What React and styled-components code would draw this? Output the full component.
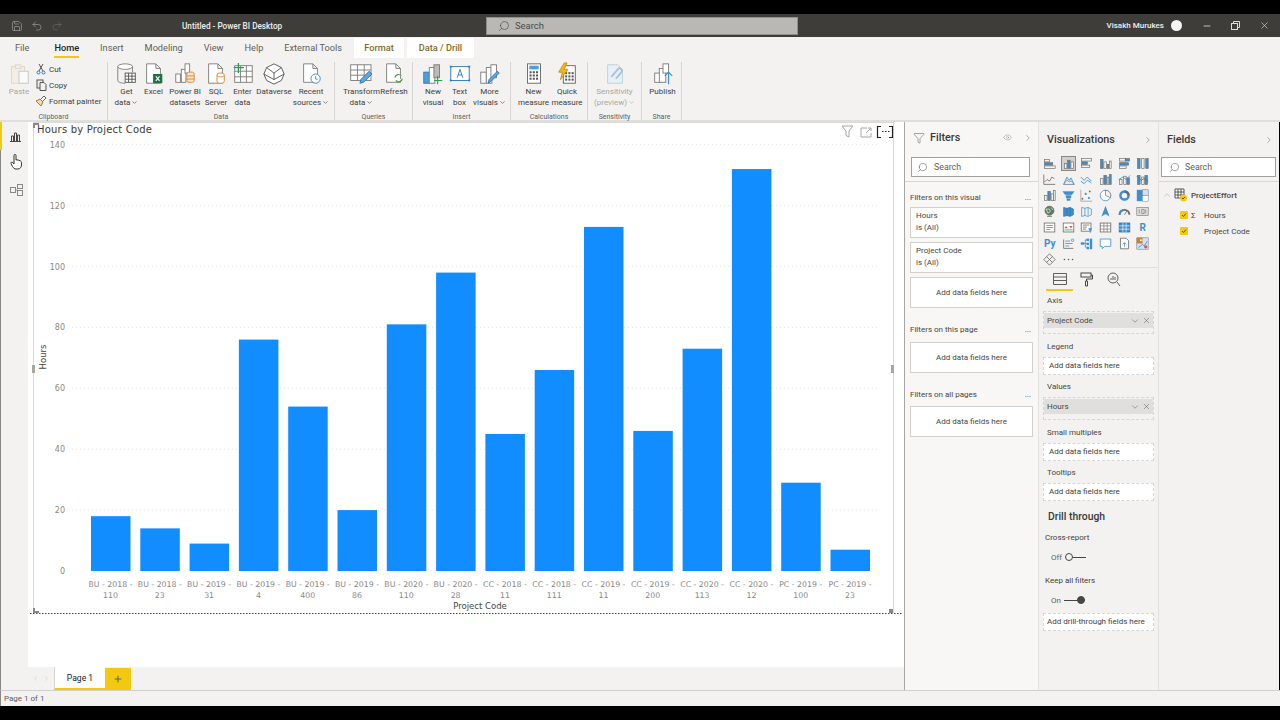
import styled, { createGlobalStyle } from "styled-components";
import { ChevronRight, ChevronDown, ChevronUp, Search, X, Eye, Filter, Plus, Undo2, Redo2, Save, Minus } from "lucide-react";

const Global = createGlobalStyle`
  html, body { margin: 0; padding: 0; background: #000; }
  body { font-family: Roboto, "Open Sans", "Liberation Sans", sans-serif; }
  * { box-sizing: border-box; }
`;

const Shell = styled.div`
  width: 1280px;
  height: 720px;
  padding: 14px 0;
  background: #000;
  display: flex;
  flex-direction: column;
  overflow: hidden;
`;

/* title bar */
const TitleBar = styled.div`
  height: 23px;
  background: #3f3d39;
  display: flex;
  align-items: center;
  color: #f3f2f1;
  flex: none;
`;
const Qat = styled.div`
  width: 182px;
  padding-left: 11px;
  display: flex;
  gap: 8px;
  align-items: center;
  color: #a5a3a0;
`;
const WinTitle = styled.div`
  width: 304px;
  font-size: 8.2px;
  font-weight: 500;
  color: #eeeeee;
`;
const Glass = styled(Search)`
  transform: scaleX(-1);
`;
const TopSearch = styled.div`
  width: 312px;
  height: 18px;
  background: #b9b8b4;
  border: 1px solid #8f8e8a;
  display: flex;
  align-items: center;
  gap: 5px;
  padding-left: 11px;
  font-size: 9.4px;
  color: #4c4b49;
`;
const User = styled.div`
  margin-left: auto;
  padding-right: 1px;
  display: flex;
  align-items: center;
  font-size: 8px;
  font-weight: 500;
  color: #eeeeee;
`;
const Avatar = styled.div`
  width: 11px;
  height: 11px;
  border-radius: 50%;
  background: #f5f5f5;
  margin: 0 10px 0 7px;
`;
const WinBtn = styled.div`
  width: 29px;
  display: flex;
  justify-content: center;
  color: #dddddd;
`;

/* tabs */
const TabRow = styled.div`
  height: 21px;
  background: #f3f2f1;
  display: flex;
  padding-left: 15px;
  flex: none;
`;
const Tab = styled.div`
  height: 21px;
  font-size: 9.2px;
  line-height: 21px;
  margin-right: ${(p) => p.$mr ?? 21}px;
  color: ${(p) => (p.$active ? "#252423" : "#605e5c")};
  font-weight: ${(p) => (p.$active ? 500 : 400)};
  border-bottom: ${(p) => (p.$active ? "2px solid #f2c811" : "none")};
`;
const ContextTab = styled.div`
  height: 20px;
  margin-top: 1px;
  margin-right: 3px;
  width: ${(p) => p.$w}px;
  background: #fff;
  text-align: center;
  font-size: 9.2px;
  line-height: 19px;
  font-weight: 500;
  color: #7d6b2e;
`;

/* ribbon */
const Ribbon = styled.div`
  height: 64px;
  background: #f3f2f1;
  border-bottom: 2px solid #dfdedc;
  display: flex;
  flex: none;
`;
const Group = styled.div`
  width: ${(p) => p.$w}px;
  display: flex;
  flex-direction: column;
  border-right: 1px solid #d8d6d4;
  margin-top: 4px;
`;
const GroupBody = styled.div`
  flex: 1;
  display: flex;
  padding-left: ${(p) => p.$pl ?? 0}px;
`;
const GroupName = styled.div`
  height: 8px;
  font-size: 7px;
  line-height: 10px;
  text-align: center;
  color: #605e5c;
`;
const BigBtn = styled.div`
  width: ${(p) => p.$w}px;
  display: flex;
  flex-direction: column;
  align-items: center;
  color: ${(p) => (p.$off ? "#a8a6a4" : "#3f3e3c")};
  font-size: 8px;
  line-height: 11px;
  text-align: center;
  white-space: nowrap;
  & > svg { flex: none; }
`;
const SmallCol = styled.div`
  display: flex;
  flex-direction: column;
  margin: -1px 0 0 3px;
`;
const SmallBtn = styled.div`
  height: 16px;
  display: grid;
  grid-template-columns: 12px 1fr;
  gap: 2px;
  align-items: center;
  justify-items: center;
  font-size: 8px;
  color: #3f3e3c;
  white-space: nowrap;
  & > span { justify-self: start; }
`;

/* main */
const Main = styled.div`
  height: 568px;
  display: flex;
  flex: none;
`;
const LeftNav = styled.div`
  width: 28px;
  background: #f3f2f1;
  border-left: 1px solid #8a8886;
  display: flex;
  flex-direction: column;
  flex: none;
`;
const NavItem = styled.div`
  height: ${(p) => p.$h}px;
  display: flex;
  align-items: center;
  padding-left: 8px;
  margin-left: -1px;
  border-left: 2px solid ${(p) => (p.$active ? "#f2c811" : "transparent")};
`;
const Canvas = styled.div`
  width: 876px;
  display: flex;
  flex-direction: column;
  flex: none;
  background: #fff;
`;
const Chart = styled.svg`
  width: 876px;
  height: 545px;
  display: block;
  flex: none;
  font-family: "DejaVu Sans", sans-serif;
`;
const PageBar = styled.div`
  height: 23px;
  background: #f3f2f1;
  display: flex;
  flex: none;
`;
const PageNav = styled.div`
  width: 26px;
  display: flex;
  align-items: center;
  justify-content: center;
  gap: 4px;
  color: #c8c6c4;
`;
const BackChevron = styled(ChevronRight)`
  transform: scaleX(-1);
`;
const PageTab = styled.div`
  width: 51px;
  background: #fff;
  border-left: 1px solid #d8d6d4;
  border-bottom: 2px solid #f2c811;
  text-align: center;
  font-size: 8.6px;
  line-height: 22px;
  color: #252423;
`;
const AddPage = styled.div`
  width: 26px;
  background: #f2c811;
  margin-top: 1px;
  display: flex;
  align-items: center;
  justify-content: center;
  color: #605e5c;
`;

/* filters */
const FilterPane = styled.div`
  width: 134px;
  background: #f8f7f6;
  border-left: 1px solid #a8a6a4;
  flex: none;
`;
const PaneHead = styled.div`
  height: 35px;
  display: flex;
  align-items: center;
  padding: 0 ${(p) => p.$pr ?? 7}px ${(p) => p.$pb ?? 0}px ${(p) => p.$pl ?? 8}px;
  font-size: 10.8px;
  font-weight: 500;
  color: #3b3a39;
  gap: 5px;
`;
const PaneTitle = styled.span`
  margin-right: auto;
`;
const EyeGap = styled(Eye)`
  margin-right: 6px;
`;
const SearchBox = styled.div`
  height: 20px;
  margin: 0 ${(p) => p.$mr ?? 8}px 0 ${(p) => p.$ml ?? 6}px;
  background: #fff;
  border: 1px solid #a19f9d;
  display: flex;
  align-items: center;
  gap: ${(p) => p.$gap ?? 6}px;
  padding-left: ${(p) => p.$pl ?? 5}px;
  font-size: 8.8px;
  color: #605e5c;
`;
const Rule = styled.div`
  height: 1px;
  background: #d8d6d4;
  margin-top: ${(p) => p.$mt ?? 4}px;
`;
const FilterBody = styled.div`
  padding: 0 5px;
`;
const SectionHead = styled.div`
  display: flex;
  justify-content: space-between;
  padding: 0 2px 0 0;
  height: 12px;
  line-height: 12px;
  font-size: 8px;
  color: #484644;
  margin-top: ${(p) => p.$mt}px;
  margin-bottom: ${(p) => p.$mb ?? 4}px;
`;
const FilterCard = styled.div`
  height: 31px;
  background: #fff;
  border: 1px solid #d2d0ce;
  margin-bottom: 4px;
  padding: 2px 5px;
  font-size: 8px;
  line-height: 12px;
  color: #484644;
`;
const AddCard = styled(FilterCard)`
  padding-top: 3px;
  line-height: 23px;
  text-align: center;
  margin-bottom: 0;
`;

/* visualizations */
const VizPane = styled.div`
  width: 120px;
  background: #f3f2f1;
  border-left: 1px solid #e4e2e0;
  flex: none;
`;
const VizGrid = styled.div`
  display: grid;
  grid-template-columns: repeat(6, 18.6px);
  grid-auto-rows: 16px;
  margin-top: -2px;
  height: 112px;
  justify-items: center;
  align-items: center;
  padding-left: 1.5px;
`;
const VizCell = styled.div`
  width: 15px;
  height: 15px;
  display: flex;
  align-items: center;
  justify-content: center;
  background: ${(p) => (p.$sel ? "#d2d0ce" : "transparent")};
  border: 1px solid ${(p) => (p.$sel ? "#8a8886" : "transparent")};
`;
const VizLetter = styled.b`
  color: #3d8fd1;
  font-size: 10px;
`;
const VizTabs = styled.div`
  border-top: 1px solid #e1dfdd;
  height: 23px;
  display: flex;
  padding-left: 7px;
`;
const VizTab = styled.div`
  width: 27px;
  height: 23px;
  display: flex;
  justify-content: center;
  align-items: center;
  border-bottom: ${(p) => (p.$active ? "2px solid #f2c811" : "none")};
`;
const Wells = styled.div`
  padding: 5px 4px 0;
`;
const WellLabel = styled.div`
  font-size: 8px;
  line-height: 12px;
  color: #484644;
  padding-left: 4px;
  margin-top: ${(p) => p.$mt ?? 0}px;
`;
const Well = styled.div`
  height: ${(p) => p.$h ?? 18}px;
  margin-top: ${(p) => p.$mt ?? 4}px;
  border: 1px dashed #d8d6d4;
  background: ${(p) => (p.$filled ? "transparent" : "#fff")};
  font-size: 8px;
  line-height: 16px;
  padding: ${(p) => (p.$filled ? "1px 0 0" : `0 0 0 ${p.$pl ?? 5}px`)};
  color: #3f3e3c;
  white-space: nowrap;
`;
const Pill = styled.div`
  height: 15px;
  background: #e1dfdd;
  display: flex;
  align-items: center;
  padding: 0 2px 0 3px;
  font-size: 8px;
  color: #484644;
  & > svg:first-of-type { margin-left: auto; margin-right: 2px; }
`;
const DrillTitle = styled.div`
  font-size: 10.4px;
  font-weight: 500;
  line-height: 14px;
  color: #3b3a39;
  margin: 9px 0 0 5px;
`;
const OptLabel = styled.div`
  font-size: 8px;
  line-height: 12px;
  color: #3f3e3c;
  margin: ${(p) => p.$mt}px 0 0 2px;
`;
const ToggleRow = styled.div`
  display: flex;
  align-items: center;
  font-size: 8px;
  height: 12px;
  color: #605e5c;
  margin: 7px 0 0 8px;
  gap: 3px;
`;
const Toggle = styled.div`
  position: relative;
  width: 21px;
  height: 1px;
  background: #484644;
`;
const Knob = styled.div`
  position: absolute;
  top: -3.5px;
  ${(p) => (p.$on ? "right: 0;" : "left: 0;")}
  width: 8px;
  height: 8px;
  border-radius: 50%;
  border: 1.2px solid #484644;
  background: ${(p) => (p.$on ? "#484644" : "#f3f2f1")};
`;

/* fields */
const FieldPane = styled.div`
  width: 121px;
  background: #f3f2f1;
  border-left: 1px solid #e4e2e0;
  flex: none;
`;
const FieldTree = styled.div`
  padding-top: 5px;
`;
const FieldRow = styled.div`
  height: 16px;
  display: flex;
  align-items: center;
  font-size: 8px;
  color: #484644;
  padding-left: ${(p) => p.$pl}px;
  font-weight: ${(p) => (p.$table ? 500 : 400)};
  margin-bottom: ${(p) => p.$mb ?? 0}px;
`;
const TableIcon = styled.svg`
  margin: 0 3px 0 2px;
`;
const Check = styled.div`
  width: 8px;
  height: 8px;
  background: #f2c811;
  border-radius: 1px;
  display: flex;
  align-items: center;
  justify-content: center;
  flex: none;
`;
const Sigma = styled.span`
  width: 13px;
  margin-left: 3px;
  font-size: 8px;
  flex: none;
`;

const StatusBar = styled.div`
  height: 16px;
  background: #f3f2f1;
  border-top: 1px solid #d2d0ce;
  border-left: 1px solid #8a8886;
  padding-left: 3px;
  font-size: 8px;
  line-height: 15px;
  color: #605e5c;
  flex: none;
`;

/* ---- ribbon drawings ---- */
const G = "#7f7d7b";
const Ic = ({ w = 24, children }) => (
  <svg width={w} height="24" viewBox={`0 0 ${(w * 26) / 24} 26`} fill="none" stroke={G} strokeWidth="1">
    {children}
  </svg>
);
const Doc = ({ x = 6, y = 2, w = 13, h = 19 }) => (
  <path d={`M${x} ${y}h${w - 5}l5 5v${h - 5}h-${w}z M${x + w - 5} ${y}v5h5`} fill="#fff" />
);
const Tbl = ({ x, y, w, h, c = G }) => (
  <g stroke={c}>
    <rect x={x} y={y} width={w} height={h} fill="#fff" />
    <path d={`M${x} ${y + h / 3}h${w}M${x} ${y + (2 * h) / 3}h${w}M${x + w / 3} ${y}v${h}M${x + (2 * w) / 3} ${y}v${h}`} />
  </g>
);

const PasteIc = () => (
  <Ic>
    <rect x="5" y="5" width="14" height="18" stroke="#e3d3bf" fill="#f5eee6" />
    <rect x="9" y="3" width="6" height="4" stroke="#d9d7d5" fill="#eee" />
    <rect x="13" y="10" width="10" height="13" stroke="#c8c6c4" fill="#fafafa" />
  </Ic>
);
const GetDataIc = () => (
  <Ic>
    <ellipse cx="11" cy="5" rx="8" ry="3" fill="#fff" />
    <path d="M3 5v15c0 2 4 3 8 3M19 5v6" />
    <Tbl x={11} y={12} w={11} h={10} c="#555" />
  </Ic>
);
const ExcelIc = () => (
  <Ic>
    <Doc x={5} y={2} w={15} h={21} />
    <rect x="12" y="13" width="10" height="10" fill="#1e7145" stroke="none" />
    <path d="M15 15.5l4 5M19 15.5l-4 5" stroke="#fff" strokeWidth="1.2" />
  </Ic>
);
const DatasetsIc = () => (
  <Ic>
    <rect x="3" y="13" width="5" height="9" fill="#fff" />
    <rect x="9" y="8" width="5" height="14" fill="#fff" />
    <rect x="13" y="2" width="5" height="10" fill="#fff" />
    <rect x="15" y="11" width="8" height="11" rx="2" fill="#fbe3c8" stroke="#d88a3c" />
    <path d="M15 15h8M15 18.5h8" stroke="#d88a3c" />
  </Ic>
);
const SqlIc = () => (
  <Ic>
    <Doc x={5} y={2} w={15} h={21} />
    <rect x="14" y="12" width="8" height="11" rx="2.5" fill="#fff" stroke="#d88a3c" />
    <path d="M14 15c2 1.500 6 1.500 8 0" stroke="#d88a3c" />
  </Ic>
);
const EnterIc = () => (
  <Ic>
    <Tbl x={4} y={4} w={19} h={18} />
    <path d="M8 1v11M3 6h11" stroke="#1e9c5a" strokeWidth="1.4" />
  </Ic>
);
const DataverseIc = () => (
  <Ic>
    <path d="M13 2l8 4 3 7-3 7-8 4-8-4-3-7 3-7z" fill="#fff" stroke="#555" />
    <path d="M5 6l8 6 8-6M2 13l11 6 11-6M13 12v7" stroke="#555" />
  </Ic>
);
const RecentIc = () => (
  <Ic>
    <Doc x={5} y={2} w={15} h={20} />
    <circle cx="18" cy="18" r="5" fill="#fff" stroke="#3a87c8" />
    <path d="M18 15.500v3h2" stroke="#3a87c8" />
  </Ic>
);
const TransformIc = () => (
  <Ic w={30}>
    <Tbl x={4} y={3} w={22} h={17} />
    <path d="M14 23l1-4 9-9 3 3-9 9z" fill="#5ea6e0" stroke="#2b78be" />
  </Ic>
);
const RefreshIc = () => (
  <Ic>
    <Doc x={5} y={2} w={15} h={20} />
    <path d="M14 17a4 4 0 0 1 7-2M22 18a4 4 0 0 1-7 2" stroke="#43a047" strokeWidth="1.3" fill="#fff" />
  </Ic>
);
const NewVisualIc = () => (
  <Ic>
    <rect x="3" y="11" width="6" height="12" fill="#4b9fe0" stroke="#2b78be" />
    <rect x="9" y="6" width="6" height="17" fill="#fff" />
    <rect x="14" y="3" width="6" height="14" fill="#bdbbb9" />
    <path d="M18 15v9M14 20h9" stroke="#2e9e5b" strokeWidth="1.2" />
  </Ic>
);
const TextBoxIc = () => (
  <svg width="24" height="24" viewBox="0 0 26 26" fill="none">
    <rect x="3" y="5" width="20" height="15" stroke="#2b78be" fill="#fff" />
    <rect x="2" y="4" width="2" height="2" fill="#2b78be" />
    <rect x="22" y="4" width="2" height="2" fill="#2b78be" />
    <rect x="2" y="19" width="2" height="2" fill="#2b78be" />
    <rect x="22" y="19" width="2" height="2" fill="#2b78be" />
    <path d="M10 17l3-9 3 9M11 14h4" stroke="#2b78be" />
  </svg>
);
const MoreVisualsIc = () => (
  <Ic>
    <rect x="3" y="11" width="6" height="12" fill="#fff" />
    <rect x="9" y="6" width="6" height="17" fill="#fff" />
    <rect x="14" y="3" width="6" height="14" fill="#fff" />
    <path d="M11 23l1-4 9-9 2 2-9 9z" fill="#5ea6e0" stroke="#2b78be" />
  </Ic>
);
const Keys = ({ x, y }) => (
  <g fill="#555" stroke="none">
    {[0, 1, 2].map((r) =>
      [0, 1, 2].map((c) => <rect key={`${r}${c}`} x={x + c * 3.500} y={y + r * 3.500} width="2.200" height="2.200" />)
    )}
  </g>
);
const MeasureIc = () => (
  <Ic>
    <rect x="6" y="2" width="14" height="21" fill="#fff" stroke="#666" />
    <rect x="8" y="4" width="10" height="4" fill="#4b9fe0" stroke="none" />
    <Keys x={8.200} y={10} />
  </Ic>
);
const QuickIc = () => (
  <Ic>
    <rect x="9" y="4" width="13" height="19" fill="#fff" stroke="#666" />
    <Keys x={11} y={11} />
    <path d="M10 1L4 11h4l-2 8 8-11h-4l3-7z" fill="#f2b811" stroke="#d08a1c" />
  </Ic>
);
const SensIc = () => (
  <Ic>
    <path d="M5 3h11l5 5v15H5z" fill="#e6f0f6" stroke="#b8d0de" />
    <path d="M9 16l7-8a2.500 2.500 0 0 1 4 3l-6 7" stroke="#aac2d2" strokeWidth="2" />
  </Ic>
);
const PublishIc = () => (
  <Ic>
    <rect x="4" y="12" width="7" height="10" fill="#fff" />
    <rect x="9" y="7" width="7" height="15" fill="#fff" />
    <rect x="13" y="2" width="6" height="10" fill="#fff" />
    <path d="M19 24V12M15 15l4-4 4 4" stroke="#3a93d8" strokeWidth="1.3" />
  </Ic>
);
const ScissorsIc = () => (
  <svg width="10" height="12" viewBox="0 0 10 12" fill="none" stroke="#555">
    <path d="M3 1l4 7M7 1L3 8" />
    <circle cx="2.500" cy="9.500" r="1.500" stroke="#2b78be" />
    <circle cx="7.500" cy="9.500" r="1.500" stroke="#2b78be" />
  </svg>
);
const CopyIc = () => (
  <svg width="11" height="12" viewBox="0 0 11 12" fill="none" stroke="#555">
    <rect x="1" y="1" width="6" height="8" />
    <path d="M4 3.500h4l2 2v6H4z" fill="#f3f2f1" />
  </svg>
);
const BrushIc = () => (
  <svg width="12" height="12" viewBox="0 0 12 12" fill="none">
    <path d="M1 6l4-2 3 3-2 4z" fill="#f3d9a4" stroke="#a8772e" />
    <path d="M6 4l3-3 2 2-3 3" stroke="#666" fill="#fff" />
  </svg>
);

/* ---- visualization pane icons ---- */
const B = "#3d8fd1";
const D = "#6b6a68";
const bars = (list) =>
  list.map(([x, y, w, h, c], i) => <rect key={i} x={x} y={y} width={w} height={h} fill={c === 1 ? B : "#f3f2f1"} stroke={D} strokeWidth=".8" />);
const vizIcons = [
  bars([[2, 3, 6, 3, 0], [2, 7, 10, 3, 1], [2, 11, 13, 3, 0]]),
  bars([[3, 8, 3, 6, 0], [7, 4, 3, 10, 1], [11, 6, 3, 8, 0]]),
  bars([[2, 2, 12, 3, 0], [2, 6, 7, 3, 1], [2, 10, 10, 3, 0]]),
  bars([[2, 3, 3, 11, 1], [6, 6, 3, 8, 0], [10, 9, 2, 5, 1], [13, 5, 2, 9, 0]]),
  bars([[2, 2, 7, 3, 0], [9, 2, 5, 3, 1], [2, 7, 11, 3, 1], [2, 11, 8, 3, 0]]),
  bars([[2, 2, 3, 12, 1], [7, 2, 3, 12, 0], [12, 2, 3, 12, 1]]),
  <path d="M1 14V2M1 14h14M2 11l3-3 3 2 3-5 3 2" fill="none" stroke={D} />,
  <g><path d="M2 14l4-9 3 4 2-3 4 8z" fill="#cfe3f4" stroke={B} /><path d="M2 14l4-5 3 2 2-1 4 4z" fill="#f3f2f1" stroke={D} strokeWidth=".7" /></g>,
  <path d="M1 5l4 4 4-4 5 5M1 10l4 3 4-4 5 3" fill="none" stroke={B} strokeWidth="1.100" />,
  bars([[2, 7, 3, 7, 0], [6, 3, 3, 11, 1], [10, 5, 2, 9, 0], [13, 2, 2, 12, 1]]),
  <g>{bars([[2, 8, 3, 6, 0], [7, 4, 3, 10, 0], [11, 6, 3, 8, 1]])}<path d="M1 8l5-3 4 3 5-5" fill="none" stroke={B} /></g>,
  <g>{bars([[2, 3, 3, 11, 1], [7, 5, 3, 9, 0], [11, 3, 3, 11, 1]])}<path d="M1 4l5 5 4-2 5 3" fill="none" stroke={D} /></g>,
  bars([[2, 8, 3, 6, 0], [6, 3, 3, 11, 1], [10, 6, 3, 8, 0], [13, 2, 2, 12, 0]]),
  <path d="M1 3h14l-3 4H4zM5 8h6v3H5zM6 12h4v2H6z" fill={B} stroke={B} strokeWidth=".5" />,
  <g fill={D}><circle cx="3" cy="12" r="1.100" /><circle cx="7" cy="6" r="1.300" fill={B} /><circle cx="12" cy="3" r="1.100" /><circle cx="11" cy="11" r="1.300" fill={B} /><path d="M1 1v14h14" fill="none" stroke={D} strokeWidth=".6" /></g>,
  <g><circle cx="8" cy="8" r="6.500" fill="#fff" stroke={B} /><path d="M8 8V1.500A6.500 6.500 0 0 1 14 10.500z" fill="#f3f2f1" stroke={D} strokeWidth=".8" /></g>,
  <g><circle cx="8" cy="8" r="5" fill="none" stroke={B} strokeWidth="3" /><path d="M8 3a5 5 0 0 1 5 5" fill="none" stroke={D} strokeWidth="3" /></g>,
  <g><rect x="1" y="1" width="7" height="14" fill={B} /><rect x="8" y="1" width="7" height="7" fill="#cfe3f4" stroke={D} strokeWidth=".6" /><rect x="8" y="8" width="7" height="7" fill="#fff" stroke={B} strokeWidth=".6" /></g>,
  <g><circle cx="8" cy="7" r="5.500" fill="#5c7a62" stroke={D} /><path d="M4 5h4l1 3-3 2zM10 3l2 3" stroke="#fff" strokeWidth=".8" fill="none" /><path d="M5 14h6" stroke={D} /></g>,
  <path d="M2 3l4 1 4-1 4 2v7l-4 2-4-1-4 1zM6 4v9M10 3v10" fill={B} stroke="#2b6ea5" strokeWidth=".8" />,
  <path d="M2 3l4 1 4-1 4 2v7l-4 2-4-1-4 1zM6 4v9M10 3v10" fill="#f3f2f1" stroke={B} strokeWidth=".9" />,
  <path d="M8 1l5 13-5-3-5 3z" fill={B} />,
  <g fill="none"><path d="M2 12a6 6 0 0 1 12 0" stroke={D} strokeWidth="2.400" /><path d="M2 12a6 6 0 0 1 5-5.800" stroke={B} strokeWidth="2.400" /><path d="M8 12l3-5" stroke={D} /></g>,
  <g><rect x="1" y="3" width="14" height="10" fill="#e1dfdd" stroke={D} strokeWidth=".7" /><path d="M4 5.500v5M7 5.500h3v5H7zM12 5.500v5" stroke="#8a8886" fill="none" /></g>,
  <g><rect x="1.500" y="2.500" width="13" height="11" fill="#fff" stroke={D} /><path d="M4 5.500h8M4 8h8M4 10.500h5" stroke={B} /></g>,
  <g><rect x="1.500" y="2.500" width="13" height="11" fill="#fff" stroke={D} /><path d="M3 9l2-3 2 3zM9 6l2 3 2-3z" fill="#d9534f" /><path d="M3 11h10" stroke="#43a047" /></g>,
  <g><rect x="1.500" y="2.500" width="12" height="10" fill="#fff" stroke={D} /><path d="M3.500 5h8M3.500 7.500h5M3.500 10h4" stroke={D} /><path d="M10 9h5l-2 3v3l-1-1v-2z" fill={B} /></g>,
  <g><rect x="1.500" y="2.500" width="13" height="11" fill="#fff" stroke={D} /><path d="M1.500 6h13M1.500 10h13M6 2.500v11M10 2.500v11" stroke={D} strokeWidth=".8" /></g>,
  <g><rect x="1.500" y="2.500" width="13" height="11" fill={B} stroke="#2b6ea5" /><path d="M1.500 6h13M1.500 10h13M6 2.500v11M10 2.500v11" stroke="#fff" strokeWidth=".8" /></g>,
  "R",
  "Py",
  <g fill="none" stroke={D}><path d="M2 3v11h12" /><path d="M4 5h6M4 8h9M4 11h5" stroke={B} /><circle cx="13" cy="4" r="1.500" stroke={B} /></g>,
  <g fill={B}><rect x="1" y="6.500" width="4" height="3" /><rect x="8" y="2" width="3" height="3" /><rect x="8" y="7" width="3" height="3" /><rect x="8" y="12" width="3" height="3" /><rect x="12" y="2" width="3" height="13" /><path d="M5 8h3M8 3.500H6.500v9H8" fill="none" stroke={B} /></g>,
  <path d="M1.500 2.500h13v9H7l-3 3v-3H1.500z" fill="#fff" stroke={B} />,
  <g fill="none"><path d="M3 1.500h7l3 3v10H3z" stroke={D} fill="#fff" /><path d="M8 12V7M6 9l2-2 2 2" stroke={B} /></g>,
  <g><rect x="1" y="1" width="14" height="14" fill="#cfe3f4" stroke={D} strokeWidth=".6" /><rect x="1" y="1" width="7" height="7" fill="#d97b2a" /><rect x="5" y="3" width="2" height="2" fill="#fff" /><path d="M3 13l5-4 2 2 4-6" stroke={B} fill="none" /><circle cx="12" cy="12" r="2" fill="#d9534f" /></g>,
  <g fill="none" stroke={D}><path d="M8 1l7 7-7 7-7-7z" /><path d="M4.500 4.500l7 7M11.500 4.500l-7 7" /></g>,
  <g fill="#605e5c"><circle cx="3" cy="8" r="1" /><circle cx="8" cy="8" r="1" /><circle cx="13" cy="8" r="1" /></g>,
];

const data = [
  ["BU - 2018 -", "110", 18],
  ["BU - 2018 -", "23", 14],
  ["BU - 2019 -", "31", 9],
  ["BU - 2019 -", "4", 76],
  ["BU - 2019 -", "400", 54],
  ["BU - 2019 -", "86", 20],
  ["BU - 2020 -", "110", 81],
  ["BU - 2020 -", "28", 98],
  ["CC - 2018 -", "11", 45],
  ["CC - 2018 -", "111", 66],
  ["CC - 2019 -", "11", 113],
  ["CC - 2019 -", "200", 46],
  ["CC - 2020 -", "113", 73],
  ["CC - 2020 -", "12", 132],
  ["PC - 2019 -", "100", 29],
  ["PC - 2019 -", "23", 7],
];
const yOf = (v) => 571 - v * 3.045;

function BarChart() {
  return (
    <Chart viewBox="28 122 876 545">
      <rect x="28" y="122" width="876" height="545" fill="#fff" />
      {/* visual frame */}
      <path d="M33.500 122v491M893.500 122v491M33 122.500h861" stroke="#dcdad8" />
      <path d="M30 613.500h873" stroke="#444" strokeDasharray="1.500 1.500" strokeWidth="1.200" />
      <rect x="33" y="123" width="6" height="2" fill="#8a8886" />
      <rect x="33" y="123" width="2" height="5" fill="#8a8886" />
      <rect x="33" y="608" width="2" height="5" fill="#8a8886" />
      <rect x="33" y="611" width="6" height="2" fill="#8a8886" />
      <rect x="32" y="365" width="3" height="8" fill="#a8a6a4" />
      <rect x="891" y="365" width="3" height="8" fill="#a8a6a4" />
      <rect x="889" y="609" width="4" height="4" fill="#8a8886" />
      <text x="37" y="133" fontSize="10" fill="#3b3a39" letterSpacing=".2">Hours by Project Code</text>

      {/* visual header */}
      <path d="M842 126h11l-4 5v6l-3-1.500V131z" fill="none" stroke="#a8a6a4" />
      <path d="M867 128h-6v9h10v-4M866 133l5-5M868 128h3v3" fill="none" stroke="#a8a6a4" />
      <path d="M881 126.500h-3.500v11h3.500M889 126.500h3.500v11h-3.500" fill="none" stroke="#222" strokeWidth="1.200" />
      <path d="M882 131.500h1.500M885 131.500h1.500M888 131.500h1.500" stroke="#222" />

      {[0, 20, 40, 60, 80, 100, 120, 140].map((v) => (
        <g key={v}>
          {v > 0 && <path d={`M72 ${yOf(v)}H880`} stroke="#e8e7e6" strokeDasharray="1 3" />}
          <text x="65" y={yOf(v) + 3} fontSize="8" textAnchor="end" fill="#8a8886">{v}</text>
        </g>
      ))}
      <text transform="translate(46 357) rotate(-90)" fontSize="8.500" textAnchor="middle" fill="#444">Hours</text>

      {data.map(([a, b, v], i) => {
        const x = 91 + i * 49.3;
        return (
          <g key={i}>
            <rect x={x} y={yOf(v)} width="39.500" height={571 - yOf(v)} fill="#118dff" />
            <text x={x + 19.500} y="587" fontSize="7.800" textAnchor="middle" fill="#8a8886">{a}</text>
            <text x={x + 19.500} y="598" fontSize="7.800" textAnchor="middle" fill="#8a8886">{b}</text>
          </g>
        );
      })}
      <text x="480" y="609" fontSize="8.500" textAnchor="middle" fill="#444">Project Code</text>
    </Chart>
  );
}

const Caret = () => <ChevronDown size={7} strokeWidth={2} />;
const Inline = styled.span`
  display: inline-flex;
  align-items: center;
  gap: 1px;
`;

const ribbonGroups = [
  {
    name: "Data", w: 227, pl: 5, items: [
      ["Get", "data", 27, <GetDataIc />, true],
      ["Excel", "", 27, <ExcelIc />],
      ["Power BI", "datasets", 36, <DatasetsIc />],
      ["SQL", "Server", 26, <SqlIc />],
      ["Enter", "data", 27, <EnterIc />],
      ["Dataverse", "", 36, <DataverseIc />],
      ["Recent", "sources", 38, <RecentIc />, true],
    ],
  },
  {
    name: "Queries", w: 78, pl: 8, items: [
      ["Transform", "data", 37, <TransformIc />, true],
      ["Refresh", "", 28, <RefreshIc />],
    ],
  },
  {
    name: "Insert", w: 98, pl: 7, items: [
      ["New", "visual", 26, <NewVisualIc />],
      ["Text", "box", 27, <TextBoxIc />],
      ["More", "visuals", 33, <MoreVisualsIc />, true],
    ],
  },
  {
    name: "Calculations", w: 77, pl: 4, items: [
      ["New", "measure", 37, <MeasureIc />],
      ["Quick", "measure", 30, <QuickIc />],
    ],
  },
  { name: "Sensitivity", w: 54, pl: 0, items: [["Sensitivity", "(preview)", 54, <SensIc />, true, true]] },
  { name: "Share", w: 40, pl: 2, items: [["Publish", "", 38, <PublishIc />]] },
];

const CheckMark = () => (
  <svg width="6" height="6" viewBox="0 0 6 6" fill="none" stroke="#555"><path d="M1 3l1.500 1.500L5 1.500" /></svg>
);

export default function App() {
  return (
    <Shell>
      <Global />
      <TitleBar>
        <Qat>
          <Save size={12} strokeWidth={1.3} />
          <Undo2 size={12} strokeWidth={1.3} />
          <Redo2 size={12} strokeWidth={1.3} color="#6c6a67" />
        </Qat>
        <WinTitle>Untitled - Power BI Desktop</WinTitle>
        <TopSearch><Glass size={12} strokeWidth={1.3} />Search</TopSearch>
        <User>
          Visakh Murukes<Avatar />
          <WinBtn><Minus size={10} /></WinBtn>
          <WinBtn>
            <svg width="9" height="9" viewBox="0 0 9 9" fill="none" stroke="#ddd"><rect x=".5" y="2.500" width="6" height="6" /><path d="M2.500 2.500v-2h6v6h-2" /></svg>
          </WinBtn>
          <WinBtn><X size={11} strokeWidth={1.4} /></WinBtn>
        </User>
      </TitleBar>

      <TabRow>
        <Tab $mr={25}>File</Tab>
        <Tab $active>Home</Tab>
        <Tab>Insert</Tab>
        <Tab>Modeling</Tab>
        <Tab>View</Tab>
        <Tab>Help</Tab>
        <Tab $mr={12}>External Tools</Tab>
        <ContextTab $w={50}>Format</ContextTab>
        <ContextTab $w={67}>Data / Drill</ContextTab>
      </TabRow>

      <Ribbon>
        <Group $w={108}>
          <GroupBody $pl={6}>
            <BigBtn $w={26} $off><PasteIc />Paste</BigBtn>
            <SmallCol>
              <SmallBtn><ScissorsIc /><span>Cut</span></SmallBtn>
              <SmallBtn><CopyIc /><span>Copy</span></SmallBtn>
              <SmallBtn><BrushIc /><span>Format painter</span></SmallBtn>
            </SmallCol>
          </GroupBody>
          <GroupName>Clipboard</GroupName>
        </Group>
        {ribbonGroups.map((g) => (
          <Group key={g.name} $w={g.w}>
            <GroupBody $pl={g.pl}>
              {g.items.map(([a, b, w, icon, caret, off]) => (
                <BigBtn key={a + b} $w={w} $off={off}>
                  {icon}
                  <span>{a}</span>
                  {b && <Inline>{b}{caret && <Caret />}</Inline>}
                </BigBtn>
              ))}
            </GroupBody>
            <GroupName>{g.name}</GroupName>
          </Group>
        ))}
      </Ribbon>

      <Main>
        <LeftNav>
          <NavItem $h={28} $active>
            <svg width="11" height="11" viewBox="0 0 11 11" fill="none" stroke="#484644"><path d="M0 10.500h11M1.500 10V5h2v5M4.500 10V2h2v8M7.500 10V4h2v6" /></svg>
          </NavItem>
          <NavItem $h={22}>
            <svg width="13" height="17" viewBox="0 0 13 17" fill="#fff" stroke="#333" strokeWidth="1"><path d="M4 9V2.500a1 1 0 0 1 2 0V7l1-.2 1 .2 1 .3 1 .4c1 .4 1.500 1 1.500 2V12c0 2-1.500 4-3.500 4H6c-1.500 0-2.500-1-3.500-2.500L1 10.500c-.5-1 .8-2 1.700-1L4 11z" /></svg>
          </NavItem>
          <NavItem $h={35}>
            <svg width="13" height="12" viewBox="0 0 13 12" fill="none" stroke="#8a8886"><rect x=".5" y="3.500" width="5" height="5" /><rect x="7.500" y=".5" width="5" height="4" /><rect x="7.500" y="6.500" width="5" height="5" /><path d="M5.500 6h2" /></svg>
          </NavItem>
        </LeftNav>

        <Canvas>
          <BarChart />
          <PageBar>
            <PageNav><BackChevron size={7} /><ChevronRight size={7} /></PageNav>
            <PageTab>Page 1</PageTab>
            <AddPage><Plus size={10} strokeWidth={2.4} /></AddPage>
          </PageBar>
        </Canvas>

        <FilterPane>
          <PaneHead $pr={5} $pb={4}>
            <Filter size={12} strokeWidth={1.1} color="#605e5c" />
            <PaneTitle>Filters</PaneTitle>
            <EyeGap size={9} strokeWidth={1.2} color="#8a8886" />
            <ChevronRight size={10} strokeWidth={1.2} color="#605e5c" />
          </PaneHead>
          <SearchBox><Glass size={11} strokeWidth={1.2} />Search</SearchBox>
          <Rule />
          <FilterBody>
            <SectionHead $mt={10} $mb={3}><span>Filters on this visual</span><span>...</span></SectionHead>
            <FilterCard>Hours<br />is (All)</FilterCard>
            <FilterCard>Project Code<br />is (All)</FilterCard>
            <AddCard>Add data fields here</AddCard>
            <SectionHead $mt={16} $mb={6}><span>Filters on this page</span><span>...</span></SectionHead>
            <AddCard>Add data fields here</AddCard>
            <SectionHead $mt={16} $mb={5}><span>Filters on all pages</span><span>...</span></SectionHead>
            <AddCard>Add data fields here</AddCard>
          </FilterBody>
        </FilterPane>

        <VizPane>
          <PaneHead $pl={8} $pr={5}>
            <PaneTitle>Visualizations</PaneTitle>
            <ChevronRight size={10} strokeWidth={1.2} color="#605e5c" />
          </PaneHead>
          <VizGrid>
            {vizIcons.map((ic, i) => (
              <VizCell key={i} $sel={i === 1}>
                {typeof ic === "string" ? <VizLetter>{ic}</VizLetter> : <svg width="13" height="13" viewBox="0 0 16 16">{ic}</svg>}
              </VizCell>
            ))}
          </VizGrid>
          <VizTabs>
            <VizTab $active>
              <svg width="14" height="14" viewBox="0 0 14 14" fill="none" stroke="#605e5c"><path d="M.5 1.500h13v11H.5zM.5 5h13M.5 8.500h13" /></svg>
            </VizTab>
            <VizTab>
              <svg width="13" height="15" viewBox="0 0 13 15" fill="none" stroke="#484644"><rect x="1" y="1" width="10" height="4" /><path d="M11 3h1.500v4H6.500v2M5.500 9h2v5h-2z" /></svg>
            </VizTab>
            <VizTab>
              <svg width="14" height="15" viewBox="0 0 14 15" fill="none" stroke="#605e5c"><circle cx="6" cy="6" r="5" /><path d="M4 8V6M6 8V4M8 8V5M10 10l3 4" /></svg>
            </VizTab>
          </VizTabs>
          <Wells>
            <WellLabel>Axis</WellLabel>
            <Well $filled $h={23} $mt={4}>
              <Pill>Project Code<ChevronDown size={10} strokeWidth={1.1} /><X size={9} strokeWidth={1.2} /></Pill>
            </Well>
            <WellLabel $mt={7}>Legend</WellLabel>
            <Well $mt={4}>Add data fields here</Well>
            <WellLabel $mt={6}>Values</WellLabel>
            <Well $filled $h={23} $mt={4}>
              <Pill>Hours<ChevronDown size={10} strokeWidth={1.1} /><X size={9} strokeWidth={1.2} /></Pill>
            </Well>
            <WellLabel $mt={7}>Small multiples</WellLabel>
            <Well>Add data fields here</Well>
            <WellLabel $mt={6}>Tooltips</WellLabel>
            <Well>Add data fields here</Well>
            <DrillTitle>Drill through</DrillTitle>
            <OptLabel $mt={8}>Cross-report</OptLabel>
            <ToggleRow>Off<Toggle><Knob /></Toggle></ToggleRow>
            <OptLabel $mt={12}>Keep all filters</OptLabel>
            <ToggleRow>On<Toggle><Knob $on /></Toggle></ToggleRow>
            <Well $mt={7} $pl={3}>Add drill-through fields here</Well>
          </Wells>
        </VizPane>

        <FieldPane>
          <PaneHead $pl={8} $pr={5}>
            <PaneTitle>Fields</PaneTitle>
            <ChevronRight size={10} strokeWidth={1.2} color="#605e5c" />
          </PaneHead>
          <SearchBox $ml={2} $mr={3} $pl={7} $gap={5}><Glass size={11} strokeWidth={1.2} />Search</SearchBox>
          <Rule />
          <FieldTree>
            <FieldRow $pl={3} $table $mb={4}>
              <ChevronUp size={10} strokeWidth={1} color="#8a8886" />
              <TableIcon width="14" height="14" viewBox="0 0 14 14">
                <path d="M1 1h9v9H1zM1 4h9M1 7h9M4 1v9M7 1v9" fill="#fff" stroke="#484644" strokeWidth=".9" />
                <circle cx="9.500" cy="10" r="3.500" fill="#f2c811" />
                <path d="M8 10l1 1 2-2" stroke="#333" fill="none" strokeWidth=".8" />
              </TableIcon>
              ProjectEffort
            </FieldRow>
            <FieldRow $pl={21}>
              <Check><CheckMark /></Check>
              <Sigma>Σ</Sigma>Hours
            </FieldRow>
            <FieldRow $pl={21}>
              <Check><CheckMark /></Check>
              <Sigma />Project Code
            </FieldRow>
          </FieldTree>
        </FieldPane>
      </Main>

      <StatusBar>Page 1 of 1</StatusBar>
    </Shell>
  );
}
